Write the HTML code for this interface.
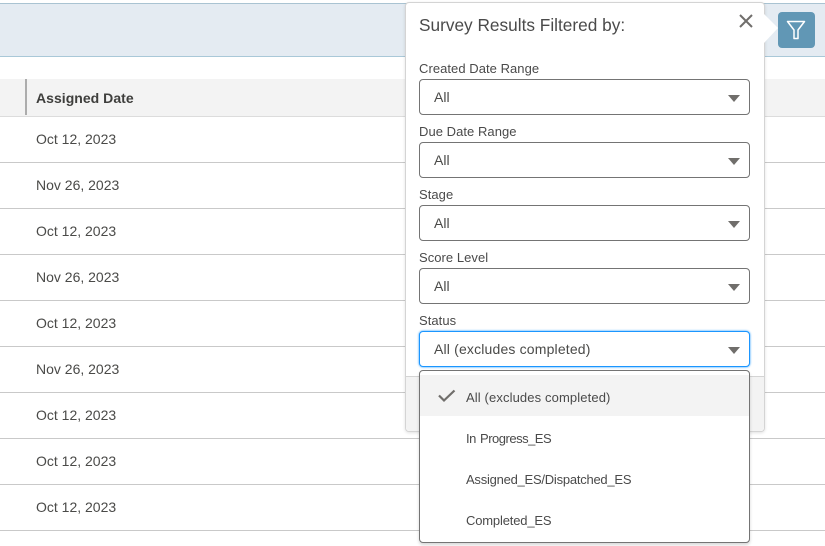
<!DOCTYPE html>
<html><head><meta charset="utf-8"><style>
html,body{margin:0;padding:0;background:#fff}
body{width:825px;height:546px;position:relative;overflow:hidden;font-family:"Liberation Sans",sans-serif;color:#4a4a48;font-size:14px}
.a{position:absolute;box-sizing:border-box}
.t{position:absolute;white-space:nowrap;line-height:18px}
.line{position:absolute;left:0;width:825px;height:1px;background:#c9c9c9}
.sel{position:absolute;left:419px;width:331px;height:36px;box-sizing:border-box;border:1px solid #747474;border-radius:4px;background:#fff}
.car{position:absolute;left:728px;width:0;height:0;border-left:6px solid transparent;border-right:6px solid transparent;border-top:7.5px solid #706e6b}
.lab{font-size:13px;color:#4a4a4a;letter-spacing:.05px}
.opt{font-size:13px;color:#4a4a4a}
</style></head><body>
<div class="a" style="left:0;top:3px;width:825px;height:54px;background:#e4ebf2;border-top:1px solid #a9c3d2;border-bottom:1px solid #a9c8d8"></div>
<div class="a" style="left:0;top:79px;width:825px;height:38px;background:#f3f3f3;border-bottom:1px solid #dcdcdc"></div>
<div class="a" style="left:25px;top:79px;width:2px;height:36px;background:#acacac"></div>
<div class="t" style="left:36px;top:89px;font-weight:bold;color:#3e3e3c;letter-spacing:.03px">Assigned Date</div>
<div class="line" style="top:162px"></div><div class="line" style="top:208px"></div><div class="line" style="top:254px"></div><div class="line" style="top:300px"></div><div class="line" style="top:346px"></div><div class="line" style="top:392px"></div><div class="line" style="top:438px"></div><div class="line" style="top:484px"></div><div class="line" style="top:530px"></div>
<div class="t" style="left:36px;top:130px">Oct 12, 2023</div>
<div class="t" style="left:36px;top:176px">Nov 26, 2023</div>
<div class="t" style="left:36px;top:222px">Oct 12, 2023</div>
<div class="t" style="left:36px;top:268px">Nov 26, 2023</div>
<div class="t" style="left:36px;top:314px">Oct 12, 2023</div>
<div class="t" style="left:36px;top:360px">Nov 26, 2023</div>
<div class="t" style="left:36px;top:406px">Oct 12, 2023</div>
<div class="t" style="left:36px;top:452px">Oct 12, 2023</div>
<div class="t" style="left:36px;top:498px">Oct 12, 2023</div>

<div class="a" style="left:778px;top:12px;width:37px;height:36px;background:#6197b5;border-radius:4px"></div>
<svg class="a" style="left:778px;top:12px" width="37" height="36" viewBox="0 0 37 36"><path d="M9.500 9.500H26.500L20 18V26.500H16V18Z" fill="none" stroke="#fff" stroke-width="1.500" stroke-linejoin="round"/></svg>

<div class="a" style="left:405px;top:2px;width:360px;height:430px;background:#fff;border:1px solid #d4d4d4;border-radius:4px;box-shadow:0 1px 3px rgba(0,0,0,.12)"></div>
<svg class="a" style="left:763px;top:14px" width="16" height="30" viewBox="0 0 16 30"><path d="M1 0L15 14L1 29Z" fill="#fff"/></svg>
<div class="a" style="left:406px;top:376px;width:358px;height:55px;background:#f3f3f3;border-top:1px solid #d4d4d4;border-radius:0 0 4px 4px"></div>
<div class="t" style="left:419px;top:15px;font-size:17.250px;line-height:20px;color:#4a4a4a">Survey Results Filtered by:</div>
<svg class="a" style="left:738px;top:13px" width="16" height="16" viewBox="0 0 16 16"><path d="M2 2L14 14M14 2L2 14" stroke="#706e6b" stroke-width="2" fill="none"/></svg>

<div class="t lab" style="left:419px;top:60px">Created Date Range</div>
<div class="sel" style="top:79px"></div><div class="t" style="left:434px;top:88px">All</div><div class="car" style="top:95px"></div>
<div class="t lab" style="left:419px;top:123px">Due Date Range</div>
<div class="sel" style="top:142px"></div><div class="t" style="left:434px;top:151px">All</div><div class="car" style="top:158px"></div>
<div class="t lab" style="left:419px;top:186px">Stage</div>
<div class="sel" style="top:205px"></div><div class="t" style="left:434px;top:214px">All</div><div class="car" style="top:221px"></div>
<div class="t lab" style="left:419px;top:249px">Score Level</div>
<div class="sel" style="top:268px"></div><div class="t" style="left:434px;top:277px">All</div><div class="car" style="top:284px"></div>
<div class="t lab" style="left:419px;top:312px">Status</div>
<div class="sel" style="top:331px;border-color:#1b96ff;box-shadow:0 0 2px #1b96ff"></div><div class="t" style="left:434px;top:340px;letter-spacing:.17px">All (excludes completed)</div><div class="car" style="top:347px"></div>

<div class="a" style="left:419px;top:370px;width:331px;height:173px;background:#fff;border:1px solid #747474;border-radius:4px;box-shadow:0 2px 3px rgba(0,0,0,.16)"></div>
<div class="a" style="left:420px;top:375px;width:329px;height:41px;background:#f3f3f3"></div>
<svg class="a" style="left:438px;top:389px" width="18" height="14" viewBox="0 0 18 14"><path d="M1 6.500L6 11.500L16.500 1.500" fill="none" stroke="#706e6b" stroke-width="2.200"/></svg>
<div class="t opt" style="left:466px;top:389px;letter-spacing:.12px">All (excludes completed)</div>
<div class="t opt" style="left:466px;top:430px;letter-spacing:-.5px;word-spacing:1.100px">In Progress_ES</div>
<div class="t opt" style="left:466px;top:471px;letter-spacing:-.24px">Assigned_ES/Dispatched_ES</div>
<div class="t opt" style="left:466px;top:512px;letter-spacing:-.17px">Completed_ES</div>
</body></html>
